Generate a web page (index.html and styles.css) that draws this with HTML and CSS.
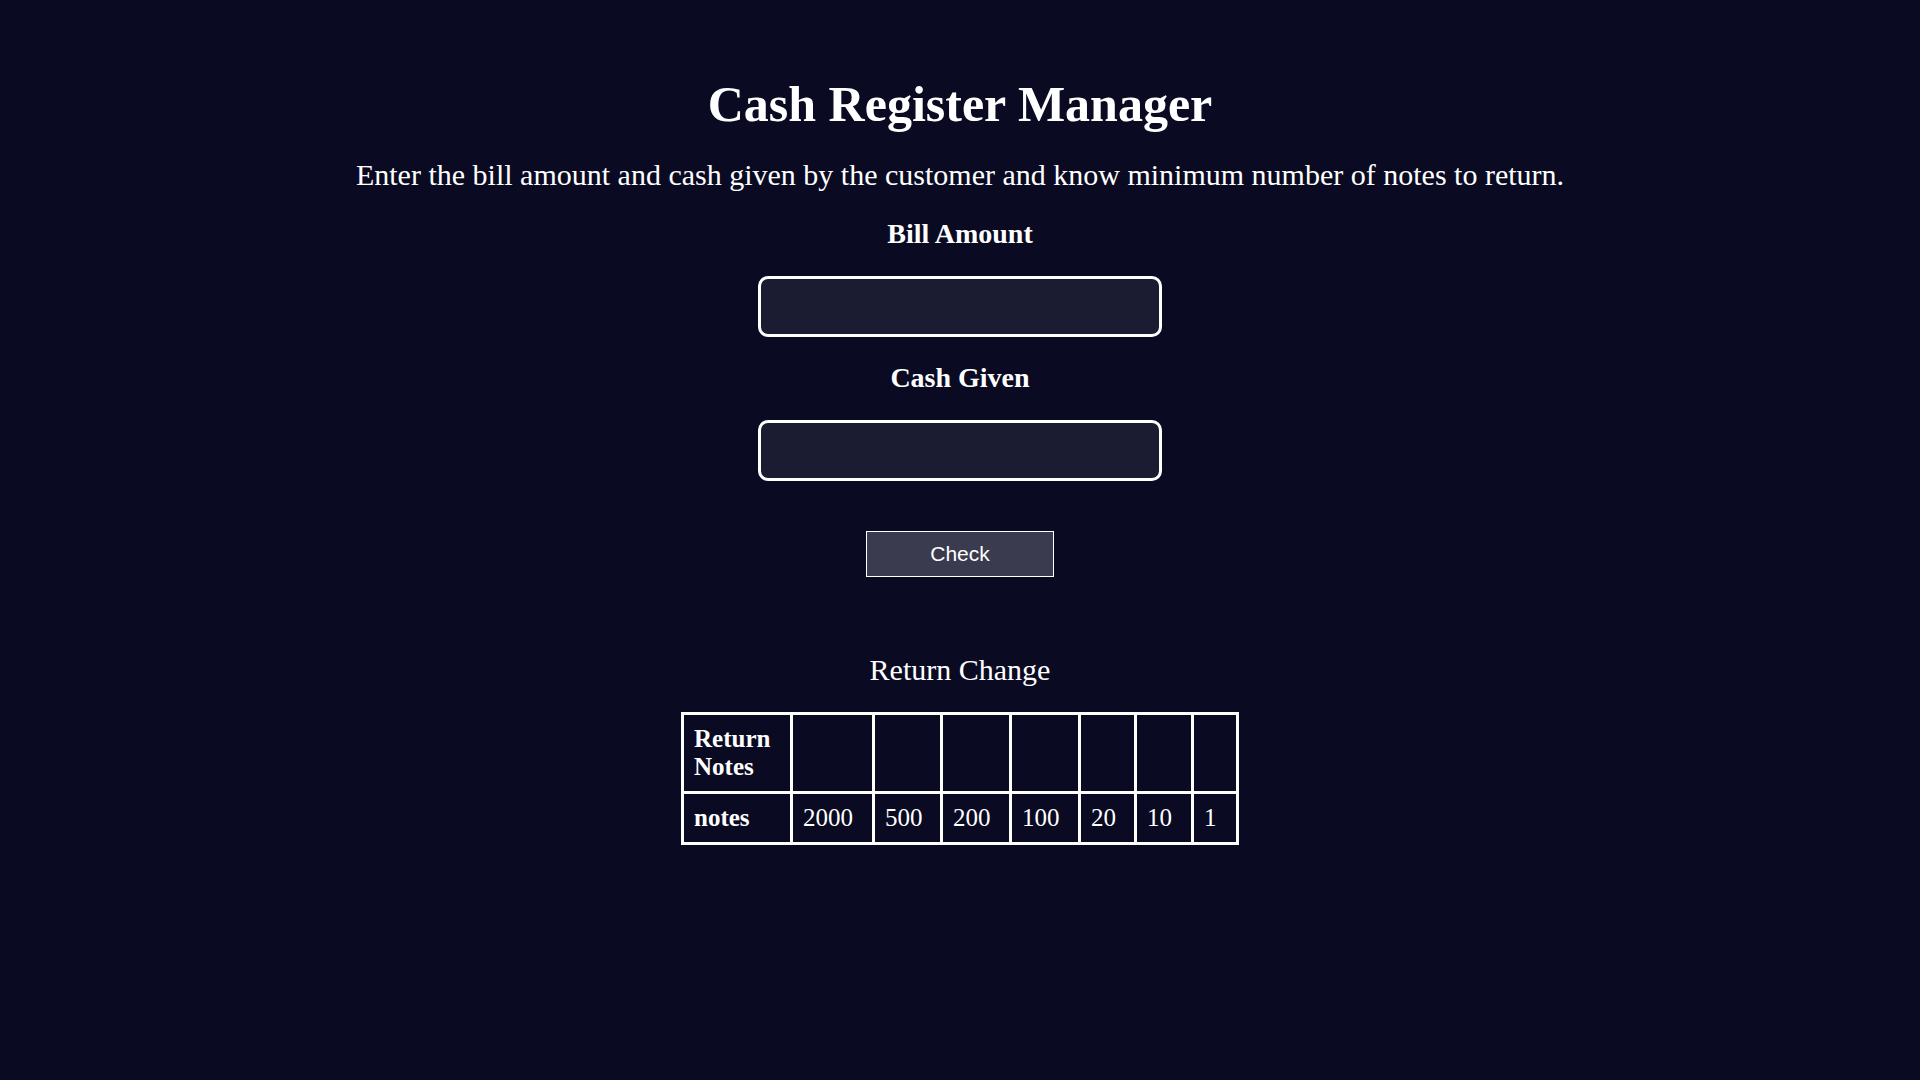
FILE: index.html
```html
<!DOCTYPE html>
<html lang="en">
<head>
<meta charset="utf-8">
<title>Cash Register Manager</title>
<link rel="stylesheet" href="styles.css">
</head>
<body>
<main class="app">
  <h1 class="title">Cash Register Manager</h1>
  <p class="intro">Enter the bill amount and cash given by the customer and know minimum number of notes to return.</p>
  <label class="field-label" for="bill">Bill Amount</label>
  <input class="field-input" id="bill" type="number">
  <label class="field-label field-label-second" for="cash">Cash Given</label>
  <input class="field-input" id="cash" type="number">
  <button class="check-btn" type="button">Check</button>
  <h2 class="section-title">Return Change</h2>
  <table class="change-table">
    <colgroup>
      <col class="c1"><col class="c2"><col class="c3"><col class="c4"><col class="c5"><col class="c6"><col class="c7"><col class="c8">
    </colgroup>
    <tbody>
      <tr>
        <th>Return<br>Notes</th>
        <td></td><td></td><td></td><td></td><td></td><td></td><td></td>
      </tr>
      <tr>
        <th>notes</th>
        <td>2000</td><td>500</td><td>200</td><td>100</td><td>20</td><td>10</td><td>1</td>
      </tr>
    </tbody>
  </table>
</main>
</body>
</html>
```

FILE: styles.css
```css
* {
  box-sizing: border-box;
}

html, body {
  margin: 0;
  padding: 0;
}

body {
  background: #0a0a23;
  color: #ffffff;
  font-family: "Liberation Serif", "Times New Roman", serif;
  min-height: 100vh;
}

.app {
  display: flex;
  flex-direction: column;
  align-items: center;
  padding-top: 75px;
}

.title {
  margin: 0;
  font-size: 50px;
  font-weight: bold;
  line-height: normal;
}

.intro {
  margin: 25px 0 0;
  font-size: 30px;
  line-height: normal;
}

.field-label {
  margin-top: 26px;
  font-size: 28px;
  font-weight: bold;
  line-height: normal;
}

.field-label-second {
  margin-top: 25px;
}

.field-input {
  margin-top: 26px;
  width: 404px;
  height: 61px;
  border: 3px solid #ffffff;
  border-radius: 10px;
  background: #1b1b32;
  color: #ffffff;
  font-size: 24px;
  padding: 0 12px;
  outline: none;
}

.check-btn {
  margin-top: 50px;
  width: 188px;
  height: 46px;
  background: #3b3b4f;
  color: #ffffff;
  border: 1px solid #ffffff;
  font-family: "Liberation Sans", Arial, sans-serif;
  font-size: 21px;
  padding: 0;
  cursor: pointer;
}

.section-title {
  margin: 76px 0 0;
  font-size: 30px;
  font-weight: normal;
  line-height: normal;
}

.change-table {
  margin-top: 25px;
  border-collapse: collapse;
  table-layout: fixed;
  width: 555px;
  font-size: 25px;
}

.change-table th,
.change-table td {
  border: 3px solid #ffffff;
  padding: 10px;
  text-align: left;
  vertical-align: middle;
  line-height: normal;
  overflow: hidden;
  white-space: nowrap;
}

.change-table th {
  font-weight: bold;
}

.c1 { width: 109px; }
.c2 { width: 82px; }
.c3 { width: 68px; }
.c4 { width: 69px; }
.c5 { width: 69px; }
.c6 { width: 56px; }
.c7 { width: 57px; }
.c8 { width: 45px; }
```
